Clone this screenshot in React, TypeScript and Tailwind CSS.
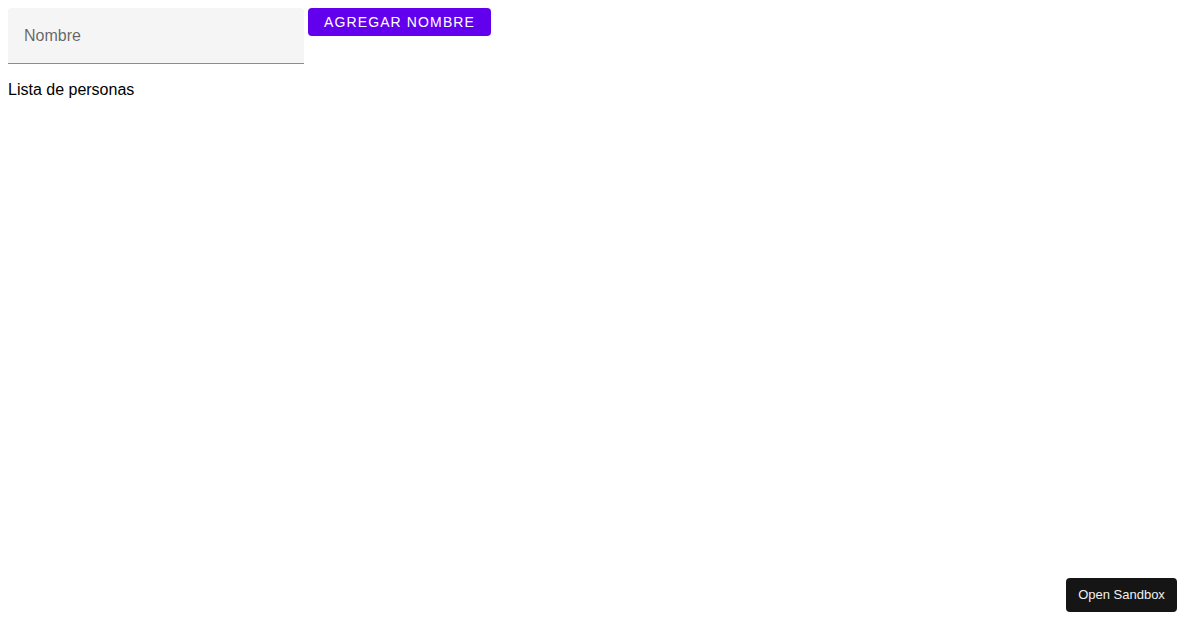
export default function App() {
  return (
    <div className="min-h-[630px] bg-white p-2 font-['Liberation_Sans',Arial,sans-serif] text-black">
      <div className="flex items-start gap-1">
        <div className="flex h-14 w-[296px] items-center rounded-t bg-[#f5f5f5] border-b border-[#8c8c8c] px-4">
          <span className="text-base text-black/60">Nombre</span>
        </div>
        <button className="h-7 rounded bg-[#6200ee] px-4 text-sm uppercase tracking-[0.08em] text-white">
          Agregar nombre
        </button>
      </div>
      <p className="mt-[17px] text-base leading-[18px]">Lista de personas</p>
      <button className="fixed right-[23px] bottom-[18px] h-[34px] w-[111px] rounded bg-[#151515] text-[13px] text-[#f0f0f0]">
        Open Sandbox
      </button>
    </div>
  );
}
